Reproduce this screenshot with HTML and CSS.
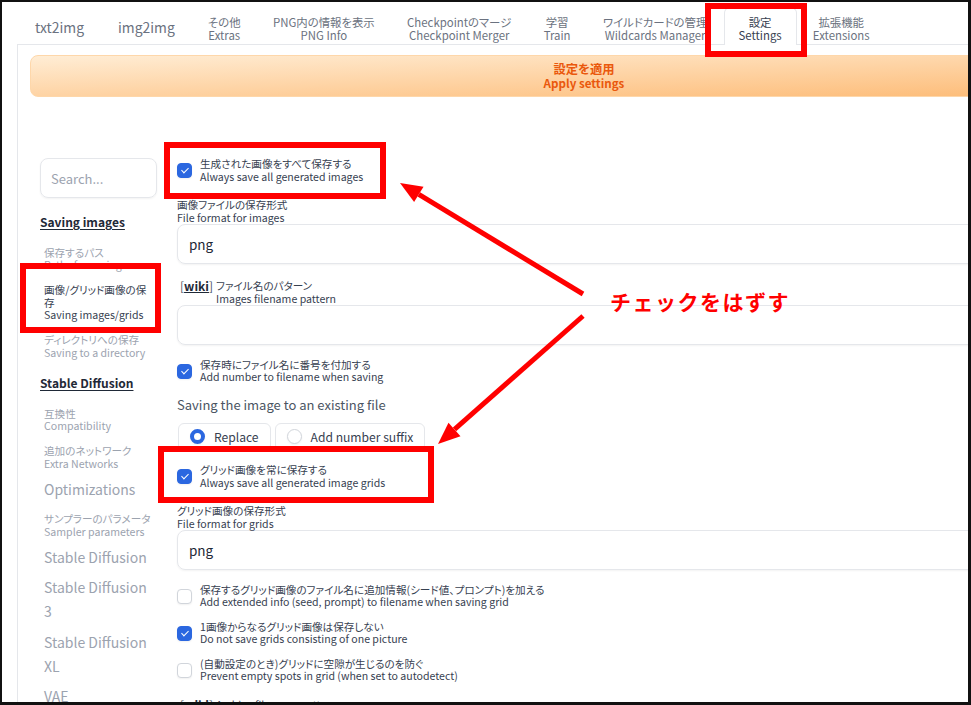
FILE: index.html
```html
<!DOCTYPE html>
<html lang="ja">
<head>
<meta charset="utf-8">
<title>Settings</title>
<link rel="stylesheet" href="styles.css">
</head>
<body>
<div class="frame">
  <div class="app">
    <nav class="tabs">
      <button class="tab big">txt2img</button>
      <button class="tab big">img2img</button>
      <button class="tab"><span>その他</span><span>Extras</span></button>
      <button class="tab"><span>PNG内の情報を表示</span><span>PNG Info</span></button>
      <button class="tab"><span>Checkpointのマージ</span><span>Checkpoint Merger</span></button>
      <button class="tab"><span>学習</span><span>Train</span></button>
      <button class="tab"><span>ワイルドカードの管理</span><span>Wildcards Manager</span></button>
      <button class="tab active"><span>設定</span><span>Settings</span></button>
      <button class="tab"><span>拡張機能</span><span>Extensions</span></button>
    </nav>
    <div class="panel">
      <button class="apply"><span>設定を適用</span><span class="en">Apply settings</span></button>
      <div class="settings">
        <aside class="side">
          <div class="search">Search...</div>
          <div class="side-h">Saving images</div>
          <div class="side-s">保存するパス<br>Paths for saving</div>
          <div class="side-s sel">画像/グリッド画像の保<br>存<br>Saving images/grids</div>
          <div class="side-s">ディレクトリへの保存<br>Saving to a directory</div>
          <div class="side-h">Stable Diffusion</div>
          <div class="side-s">互換性<br>Compatibility</div>
          <div class="side-s">追加のネットワーク<br>Extra Networks</div>
          <div class="side-b">Optimizations</div>
          <div class="side-s">サンプラーのパラメータ<br>Sampler parameters</div>
          <div class="side-b">Stable Diffusion</div>
          <div class="side-b">Stable Diffusion 3</div>
          <div class="side-b">Stable Diffusion XL</div>
          <div class="side-b">VAE</div>
        </aside>
        <main class="main">
          <div class="cb"><span class="box on"></span><span class="t">生成された画像をすべて保存する<br>Always save all generated images</span></div>
          <div class="field">
            <div class="lbl">画像ファイルの保存形式<br>File format for images</div>
            <div class="input">png</div>
          </div>
          <div class="field">
            <div class="lbl wl"><span class="wiki">[<u>wiki</u>]</span><span>ファイル名のパターン<br>Images filename pattern</span></div>
            <div class="input"></div>
          </div>
          <div class="cb"><span class="box on"></span><span class="t">保存時にファイル名に番号を付加する<br>Add number to filename when saving</span></div>
          <div class="rtitle">Saving the image to an existing file</div>
          <div class="radios">
            <label class="radio"><span class="dot on"></span>Replace</label>
            <label class="radio"><span class="dot"></span>Add number suffix</label>
          </div>
          <div class="cb"><span class="box on"></span><span class="t">グリッド画像を常に保存する<br>Always save all generated image grids</span></div>
          <div class="field">
            <div class="lbl">グリッド画像の保存形式<br>File format for grids</div>
            <div class="input">png</div>
          </div>
          <div class="cb"><span class="box"></span><span class="t">保存するグリッド画像のファイル名に追加情報(シード値、プロンプト)を加える<br>Add extended info (seed, prompt) to filename when saving grid</span></div>
          <div class="cb"><span class="box on"></span><span class="t">1画像からなるグリッド画像は保存しない<br>Do not save grids consisting of one picture</span></div>
          <div class="cb"><span class="box"></span><span class="t">(自動設定のとき)グリッドに空隙が生じるのを防ぐ<br>Prevent empty spots in grid (when set to autodetect)</span></div>
          <div class="field">
            <div class="lbl wl"><span class="wiki">[<u>wiki</u>]</span><span>Archive filename pattern</span></div>
          </div>
        </main>
      </div>
    </div>
  </div>

  <div class="mark m-tab"></div>
  <div class="mark m-cb1"></div>
  <div class="mark m-side"></div>
  <div class="mark m-grid"></div>
  <svg class="arrows" width="966" height="700" viewBox="0 0 966 700">
    <line x1="581" y1="292" x2="416.8" y2="192.4" stroke="#ff0000" stroke-width="5"/>
    <polygon points="398,181 421.5,184.7 412.1,200.1" fill="#ff0000"/>
    <line x1="581" y1="314" x2="452.5" y2="427.4" stroke="#ff0000" stroke-width="5"/>
    <polygon points="436,442 446.5,420.7 458.5,434.2" fill="#ff0000"/>
  </svg>
  <div class="note">チェックをはずす</div>
</div>
</body>
</html>
```

FILE: styles.css
```css
* { box-sizing: border-box; }
html, body { margin: 0; padding: 0; background: #fff; }
body {
  font-family: "Noto Sans CJK JP", "Noto Sans", sans-serif;
  font-feature-settings: "palt";
  color: #374151;
}
.frame {
  position: relative;
  width: 971px;
  height: 705px;
  border-style: solid;
  border-color: #111;
  border-width: 2px 3px 3px 2px;
  overflow: hidden;
  background: #fff;
}
.app { width: 1170px; }

/* tabs */
.tabs {
  display: flex;
  margin-left: 16px;
  padding-top: 5px;
  margin-bottom: -1px;
  position: relative;
  z-index: 1;
}
.tab {
  height: 38px;
  padding: 5px 15.2px 0;
  border: 1px solid transparent;
  border-bottom: 0;
  border-radius: 6px 6px 0 0;
  background: none;
  font-family: inherit;
  font-feature-settings: "palt";
  font-size: 11.4px;
  line-height: 13px;
  color: #6b7280;
  display: flex;
  flex-direction: column;
  justify-content: center;
  align-items: center;
  white-space: nowrap;
}
.tab.big { font-size: 13.9px; line-height: 18px; padding: 2px 16px 1px; }
.tab.active {
  border-color: #e5e7eb;
  background: #fff;
  color: #374151;
  padding: 5px 14px 0;
}

/* panel */
.panel {
  margin-left: 15px;
  width: 1134px;
  height: 720px;
  border: 1px solid #e5e7eb;
  padding: 10px 12px;
}
.apply {
  display: flex;
  flex-direction: column;
  align-items: center;
  justify-content: center;
  width: 1108px;
  height: 42px;
  border: 1px solid #fed7aa;
  border-radius: 8px;
  background: linear-gradient(to bottom right, #ffedd5, #fdba74);
  color: #ea580c;
  font-family: inherit;
  font-feature-settings: "palt";
  font-weight: 600;
  font-size: 12.3px;
  line-height: 14px;
}
.apply .en { font-size: 11.6px; }

.settings {
  display: flex;
  gap: 20px;
  margin-top: 61px;
  padding-left: 10px;
}

/* sidebar */
.side {
  width: 117px;
  flex: none;
  display: flex;
  flex-direction: column;
  gap: 6px;
}
.search {
  height: 40px;
  border: 1px solid #e5e7eb;
  border-radius: 8px;
  box-shadow: 0 1px 2px rgba(0,0,0,0.05);
  padding-left: 10px;
  display: flex;
  align-items: center;
  font-size: 13px;
  color: #9ca3af;
}
.side-h {
  margin-top: 6px;
  font-size: 12px;
  font-weight: 700;
  line-height: 24px;
  color: #1f2937;
  text-decoration: underline;
  text-underline-offset: 2px;
}
.side-s {
  padding: 6.5px 0 0 4px;
  font-size: 10.6px;
  line-height: 12.5px;
  color: #9ca3af;
  white-space: nowrap;
}
.side-s.sel { color: #374151; }
.side-b {
  padding: 0 4px;
  margin-top: 0.5px;
  font-size: 14px;
  line-height: 24px;
  color: #9ca3af;
}

/* main */
.main {
  flex: 1;
  display: flex;
  flex-direction: column;
}
.cb {
  display: flex;
  align-items: center;
  gap: 8px;
  margin-top: 12px;
}
.main > .cb:first-child { margin-top: 0; }
.field + .cb, .radios + .cb { margin-top: 13.5px; }
.box {
  width: 15px;
  height: 15px;
  flex: none;
  border: 1px solid #d1d5db;
  border-radius: 4px;
  background: #fff;
  box-shadow: 0 1px 2px rgba(0,0,0,0.06);
  position: relative;
}
.box.on {
  background: #2b67e0;
  border-color: #2b67e0;
}
.box.on::after {
  content: "";
  position: absolute;
  left: 4.5px;
  top: 2px;
  width: 3px;
  height: 6px;
  border: solid #fff;
  border-width: 0 1.6px 1.6px 0;
  transform: rotate(45deg);
}
.t, .lbl {
  font-size: 10.6px;
  line-height: 12.5px;
  color: #374151;
  white-space: nowrap;
}
.field { margin-top: 16px; }
.lbl.wl { display: flex; align-items: flex-start; gap: 3px; padding-left: 3px; }
.wiki { font-size: 12px; color: #4b5563; }
.wiki u { font-weight: 700; color: #1f2937; }
.input {
  height: 40px;
  border: 1px solid #e5e7eb;
  border-radius: 8px;
  box-shadow: 0 1px 2px rgba(0,0,0,0.05);
  padding-left: 11px;
  display: flex;
  align-items: center;
  font-size: 13.5px;
  color: #1f2937;
}
.rtitle {
  margin-top: 13px;
  font-size: 13px;
  line-height: 16px;
  color: #4b5563;
}
.radios {
  display: flex;
  gap: 4px;
  margin-top: 10px;
  padding-left: 1px;
}
.radio {
  height: 28px;
  display: flex;
  align-items: center;
  gap: 9px;
  padding: 0 11px 0 11px;
  border: 1px solid #e5e7eb;
  border-radius: 6px;
  font-size: 12.1px;
  color: #374151;
}
.dot {
  width: 15px;
  height: 15px;
  border-radius: 50%;
  border: 1px solid #d1d5db;
  background: #fff;
  box-shadow: 0 1px 2px rgba(0,0,0,0.06);
}
.dot.on {
  border: 4.5px solid #2b67e0;
  background: #fff;
}

/* annotations */
.mark {
  position: absolute;
  border: 6px solid #ff0000;
  z-index: 5;
}
.m-tab { left: 703px; top: 1px; width: 102px; height: 54px; }
.m-cb1 { left: 162px; top: 140px; width: 222px; height: 57px; }
.m-side { left: 18px; top: 261px; width: 141px; height: 70px; }
.m-grid { left: 156px; top: 444px; width: 276px; height: 57px; }
.arrows { position: absolute; left: 0; top: 0; z-index: 6; }
.note {
  position: absolute;
  left: 608px;
  top: 287px;
  z-index: 6;
  font-size: 21px;
  line-height: 24px;
  font-weight: 700;
  letter-spacing: 1.5px;
  color: #ff0000;
  font-feature-settings: normal;
}
```
